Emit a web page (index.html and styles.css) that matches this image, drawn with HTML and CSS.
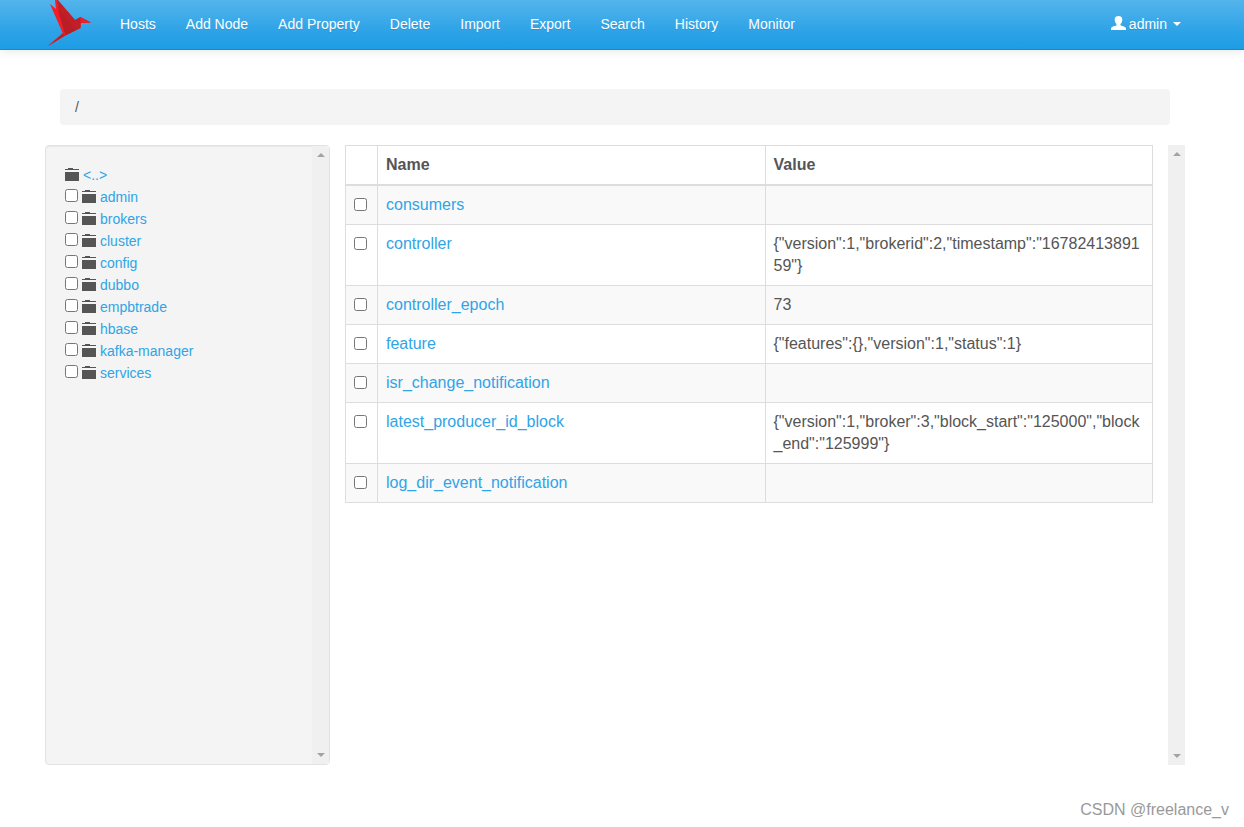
FILE: index.html
```html
<!DOCTYPE html>
<html lang="en">
<head>
	<meta charset="UTF-8">
	<title>ZooKeeper UI</title>
	<link rel="stylesheet" href="styles.css">
</head>
<body>

	<nav class="navbar">
		<div class="container navbar-inner">
			<a class="logo" href="#" aria-label="Home">
				<svg width="44" height="47" viewBox="0 0 44 47">
					<path fill="#f21d25" d="M2 4 L8 9 L7 0 L10 0 L27 20 L32.500 17 L43 22.500 L33 23 L32.500 28 L16 36 L0 46 L14.700 33 Z"/>
					<path fill="#c01f27" d="M9.500 0 L27 20 L32.500 17 L32.500 28 L17.500 35.500 L11 14 Z"/>
					<path fill="#a91e25" d="M10 9 L27 30 L17.500 35 Z" opacity=".35"/>
					<path fill="#e3242b" d="M32.500 17 L43 22.500 L33 23 Z"/>
					<path fill="#c41e24" d="M0 46 L15 33.500 L17.500 35.500 Z"/>
				</svg>
			</a>
			<ul class="nav">
				<li><a href="#">Hosts</a></li>
				<li><a href="#">Add Node</a></li>
				<li><a href="#">Add Property</a></li>
				<li><a href="#">Delete</a></li>
				<li><a href="#">Import</a></li>
				<li><a href="#">Export</a></li>
				<li><a href="#">Search</a></li>
				<li><a href="#">History</a></li>
				<li><a href="#">Monitor</a></li>
			</ul>
			<button class="user" type="button">
				<svg width="15" height="14" viewBox="0 0 15 14"><path fill="#fff" d="M7.500 0C5 0 3.700 1.500 3.700 3.500C3.700 5.500 4.500 7 5.500 8V9.300C5 10 0 10.500 0 12.500V14H15V12.500C15 10.500 10 10 9.500 9.300V8C10.500 7 11.300 5.500 11.300 3.500C11.300 1.500 10 0 7.500 0Z"/></svg>
				<span>admin</span>
				<span class="caret"></span>
			</button>
		</div>
	</nav>

	<svg class="defs" width="0" height="0">
		<symbol id="folder" viewBox="0 0 14 13">
			<path d="M0 1H3V0H8V1H14V2H0Z M0 4H14V13H0Z"/>
		</symbol>
	</svg>

	<main class="container">
		<div class="breadcrumb">/</div>

		<div class="content">
			<aside class="well">
				<ul class="tree">
					<li><svg class="folder"><use href="#folder"/></svg><a href="#">&lt;..&gt;</a></li>
					<li><input type="checkbox" aria-label="admin"><svg class="folder"><use href="#folder"/></svg><a href="#">admin</a></li>
					<li><input type="checkbox" aria-label="brokers"><svg class="folder"><use href="#folder"/></svg><a href="#">brokers</a></li>
					<li><input type="checkbox" aria-label="cluster"><svg class="folder"><use href="#folder"/></svg><a href="#">cluster</a></li>
					<li><input type="checkbox" aria-label="config"><svg class="folder"><use href="#folder"/></svg><a href="#">config</a></li>
					<li><input type="checkbox" aria-label="dubbo"><svg class="folder"><use href="#folder"/></svg><a href="#">dubbo</a></li>
					<li><input type="checkbox" aria-label="empbtrade"><svg class="folder"><use href="#folder"/></svg><a href="#">empbtrade</a></li>
					<li><input type="checkbox" aria-label="hbase"><svg class="folder"><use href="#folder"/></svg><a href="#">hbase</a></li>
					<li><input type="checkbox" aria-label="kafka-manager"><svg class="folder"><use href="#folder"/></svg><a href="#">kafka-manager</a></li>
					<li><input type="checkbox" aria-label="services"><svg class="folder"><use href="#folder"/></svg><a href="#">services</a></li>
				</ul>
				<div class="scrollbar"><span class="up"></span><span class="down"></span></div>
			</aside>

			<section class="props">
				<div class="table-wrap">
					<table class="table">
						<colgroup><col class="col-check"><col><col></colgroup>
						<thead>
							<tr><th></th><th>Name</th><th>Value</th></tr>
						</thead>
						<tbody>
							<tr><td><input type="checkbox" aria-label="consumers"></td><td><a href="#">consumers</a></td><td></td></tr>
							<tr><td><input type="checkbox" aria-label="controller"></td><td><a href="#">controller</a></td><td>{"version":1,"brokerid":2,"timestamp":"1678241389159"}</td></tr>
							<tr><td><input type="checkbox" aria-label="controller_epoch"></td><td><a href="#">controller_epoch</a></td><td>73</td></tr>
							<tr><td><input type="checkbox" aria-label="feature"></td><td><a href="#">feature</a></td><td>{"features":{},"version":1,"status":1}</td></tr>
							<tr><td><input type="checkbox" aria-label="isr_change_notification"></td><td><a href="#">isr_change_notification</a></td><td></td></tr>
							<tr><td><input type="checkbox" aria-label="latest_producer_id_block"></td><td><a href="#">latest_producer_id_block</a></td><td>{"version":1,"broker":3,"block_start":"125000","block_end":"125999"}</td></tr>
							<tr><td><input type="checkbox" aria-label="log_dir_event_notification"></td><td><a href="#">log_dir_event_notification</a></td><td></td></tr>
						</tbody>
					</table>
				</div>
				<div class="scrollbar"><span class="up"></span><span class="down"></span></div>
			</section>
		</div>
	</main>

	<footer class="credit">CSDN @freelance_v</footer>

</body>
</html>
```
FILE: styles.css
```css
*{ box-sizing: border-box; }
body{ margin: 0; background: #fff; color: #555; font-family: "Liberation Sans", Arial, sans-serif; font-size: 14px; line-height: 20px; }
a{ color: #2fa4e7; text-decoration: none; }
ul{ margin: 0; padding: 0; list-style: none; }
.defs{ display: block; }

/* page keeps a scrollbar gutter on the right */
.navbar, main.container{ padding-right: 14px; }
.container{ max-width: 1140px; margin: 0 auto; }
main.container{ max-width: 1154px; padding-top: 39px; }

.navbar{ height: 50px; border-bottom: 1px solid #178acc; box-shadow: 0 1px 10px rgba(0,0,0,.1);
	background: linear-gradient(#54b4eb, #2fa4e7 60%, #1d9ce5); }
.navbar-inner{ display: flex; align-items: flex-start; }
.logo{ display: block; width: 60px; padding-left: 3px; }
.logo svg{ display: block; }
.nav{ display: flex; flex: 1; }
.nav a{ display: block; padding: 14px 15px; color: #fff; text-shadow: 0 1px 0 rgba(0,0,0,.1); }
.user{ display: flex; align-items: center; gap: 3px; padding: 14px 4px; border: 0; background: none; color: #fff;
	font: inherit; text-shadow: 0 1px 0 rgba(0,0,0,.1); }
.user svg{ margin-bottom: 2px; }
.caret{ margin-left: 3px; border: 4px solid transparent; border-top-color: #fff; border-bottom: 0; }

.breadcrumb{ margin: 0 15px 20px; padding: 8px 15px; border-radius: 4px; background: #f4f4f4; }

.content{ display: flex; gap: 15px; min-height: 620px; }
.well{ display: flex; width: 25%; border: 1px solid #e2e2e2; border-radius: 4px; background: #f4f4f4;
	box-shadow: inset 0 1px 1px rgba(0,0,0,.05); }
.tree{ flex: 1; padding: 18px 19px; line-height: 22px; }
.tree li{ display: flex; align-items: center; height: 22px; }
.tree input{ width: 13px; height: 13px; margin: 0 4px 4px 0; }
.folder{ width: 14px; height: 13px; margin: 0 4px 1px 0; fill: #555; }

.scrollbar{ display: flex; flex-direction: column; justify-content: space-between; align-items: center;
	width: 17px; padding: 7px 0; background: #f0f0f0; }
.up, .down{ border: 4px solid transparent; }
.up{ border-top: 0; border-bottom-color: #a3a3a3; }
.down{ border-bottom: 0; border-top-color: #a3a3a3; }

.props{ display: flex; flex: 1; gap: 15px; }
.table-wrap{ flex: 1; }
.table{ width: 100%; table-layout: fixed; border-collapse: collapse; border: 1px solid #ddd; font-size: 16px; line-height: 22px; }
.col-check{ width: 32px; }
.table th, .table td{ height: 39px; padding: 8px; border: 1px solid #ddd; text-align: left; vertical-align: top; word-break: break-all; }
.table th{ border-bottom-width: 2px; }
.table tbody tr:nth-child(odd){ background: #f9f9f9; }
.table input{ display: block; width: 13px; height: 13px; margin: 4px 0 0; }

.credit{ padding: 35px 15px 0 0; color: #999; font-size: 16px; text-align: right; }
```
